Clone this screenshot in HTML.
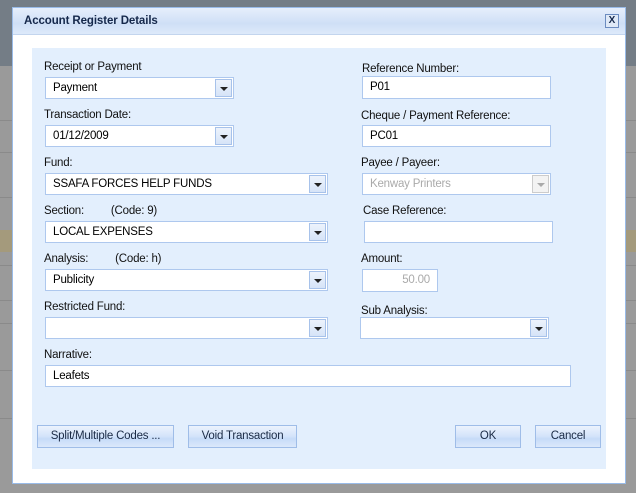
<!DOCTYPE html>
<html><head><style>
*{margin:0;padding:0;box-sizing:border-box}
body{width:636px;height:493px;overflow:hidden;position:relative;background:#9a9a9a;font-family:"Liberation Sans",sans-serif;font-size:11.5px;letter-spacing:-0.2px;color:#000}
.bgtop{position:absolute;left:0;top:0;width:636px;height:66px;background:#747d86}
.ln{position:absolute;left:0;width:636px;height:1px;background:#8a8a8a}
.dlg{position:absolute;left:12px;top:7px;width:614px;height:477px;background:#fff;border:1px solid #99bbe8}
.title{position:absolute;left:0;top:0;width:612px;height:27px;background:linear-gradient(#e6effc,#cfdff6 60%,#dde9fa);border-bottom:1px solid #c3d5ee;font-weight:bold;font-size:11.5px;letter-spacing:-0.1px;color:#15284b;padding:7px 0 0 11px}
.x{position:absolute;left:592px;top:6px;width:14px;height:14px;border:1px solid #6c8cc0;background:#dfe9f7;font-size:10px;font-weight:bold;text-align:center;line-height:12px;color:#15284b;letter-spacing:0}
.panel{position:absolute;left:32px;top:48px;width:574px;height:421px;background:#e3effd}
.l{position:absolute;color:#111}
.f{position:absolute;height:22px;background:#fff;border:1px solid #aec8ee;padding:4px 0 0 7px}
.dd{position:absolute;right:1px;top:1px;width:17px;height:18px;background:linear-gradient(#edf3fc,#d6e4f8);border:1px solid #a7c2ea}
.dd:after{content:"";position:absolute;left:4px;top:7px;border-left:4px solid transparent;border-right:4px solid transparent;border-top:4px solid #222}
.dis{color:#aaa}
.dis .dd{background:#f3f3f3;border-color:#ccc}
.dis .dd:after{border-top-color:#aaa}
.b{position:absolute;top:425px;height:23px;border:1px solid #9fbde8;background:linear-gradient(#ecf3fd,#d3e3fa 50%,#c6dbf8 60%,#dbe8fb);text-align:center;color:#1a2a45;padding-top:4px}
</style></head><body>
<div class="bgtop"></div>
<div class="ln" style="top:120px"></div><div class="ln" style="top:152px"></div><div class="ln" style="top:197px"></div><div class="ln" style="top:230px"></div><div class="ln" style="top:265px"></div><div class="ln" style="top:300px"></div><div class="ln" style="top:323px"></div><div class="ln" style="top:370px"></div><div class="ln" style="top:418px"></div>
<div style="position:absolute;left:0;top:230px;width:12px;height:22px;background:#a49a7c"></div>
<div style="position:absolute;left:626px;top:230px;width:10px;height:22px;background:#a49a7c"></div>
<div class="dlg">
<div class="title">Account Register Details</div>
<div class="x">X</div>
</div>
<div class="panel"></div>

<div class="l" style="left:44px;top:61px">Receipt or Payment</div>
<div class="f" style="left:45px;top:77px;width:189px">Payment<div class="dd"></div></div>
<div class="l" style="left:44px;top:109px">Transaction Date:</div>
<div class="f" style="left:45px;top:125px;width:189px">01/12/2009<div class="dd"></div></div>
<div class="l" style="left:44px;top:157px">Fund:</div>
<div class="f" style="left:45px;top:173px;width:283px">SSAFA FORCES HELP FUNDS<div class="dd"></div></div>
<div class="l" style="left:44px;top:205px">Section:&nbsp;&nbsp;&nbsp;&nbsp;&nbsp;&nbsp;&nbsp;&nbsp; (Code: 9)</div>
<div class="f" style="left:45px;top:221px;width:283px">LOCAL EXPENSES<div class="dd"></div></div>
<div class="l" style="left:44px;top:253px">Analysis:&nbsp;&nbsp;&nbsp;&nbsp;&nbsp;&nbsp;&nbsp;&nbsp; (Code: h)</div>
<div class="f" style="left:45px;top:269px;width:283px">Publicity<div class="dd"></div></div>
<div class="l" style="left:44px;top:301px">Restricted Fund:</div>
<div class="f" style="left:45px;top:317px;width:283px"><div class="dd"></div></div>
<div class="l" style="left:44px;top:349px">Narrative:</div>
<div class="f" style="left:45px;top:365px;width:526px">Leafets</div>

<div class="l" style="left:362px;top:63px">Reference Number:</div>
<div class="f" style="left:362px;top:76px;width:189px;height:23px">P01</div>
<div class="l" style="left:361px;top:110px">Cheque / Payment Reference:</div>
<div class="f" style="left:362px;top:125px;width:189px">PC01</div>
<div class="l" style="left:361px;top:157px">Payee / Payeer:</div>
<div class="f dis" style="left:362px;top:173px;width:189px">Kenway Printers<div class="dd"></div></div>
<div class="l" style="left:363px;top:205px">Case Reference:</div>
<div class="f" style="left:364px;top:221px;width:189px"></div>
<div class="l" style="left:361px;top:253px">Amount:</div>
<div class="f dis" style="left:362px;top:269px;width:76px;height:23px;text-align:right;padding-right:7px">50.00</div>
<div class="l" style="left:361px;top:305px">Sub Analysis:</div>
<div class="f" style="left:360px;top:317px;width:189px"><div class="dd"></div></div>

<div class="b" style="left:37px;width:137px">Split/Multiple Codes ...</div>
<div class="b" style="left:188px;width:109px">Void Transaction</div>
<div class="b" style="left:455px;width:66px">OK</div>
<div class="b" style="left:535px;width:66px">Cancel</div>
</body></html>
